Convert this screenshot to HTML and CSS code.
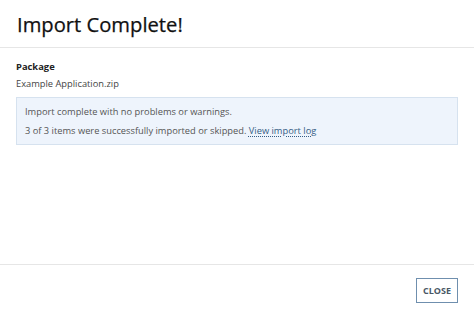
FILE: index.html
```html
<!DOCTYPE html>
<html>
<head>
<meta charset="utf-8">
<link rel="stylesheet" href="styles.css">
</head>
<body>
<div class="dialog">
  <div class="header"><h1 class="title">Import Complete!</h1></div>
  <div class="content">
    <div class="label">Package</div>
    <div class="value">Example Application.zip</div>
    <div class="notice">
      <p class="line">Import complete with no problems or warnings.</p>
      <p class="line">3 of 3 items were successfully imported or skipped. <a class="link" href="#">View import log</a></p>
    </div>
  </div>
  <div class="footer"><button class="btn">CLOSE</button></div>
</div>
</body>
</html>
```
FILE: styles.css
```css
html, body { margin: 0; padding: 0; background: #fff; }
body { font-family: "Open Sans", "Liberation Sans", sans-serif; color: #333; }
.dialog { width: 474px; height: 316px; display: flex; flex-direction: column; }
.header { height: 48px; border-bottom: 1px solid #e6e6e6; display: flex; align-items: center; padding: 0 17px; box-sizing: border-box; }
.title { margin: 0; font-size: 20.2px; font-weight: 400; color: #111; -webkit-text-stroke: 0.25px #111; }
.content { flex: 1; padding: 12px 16px 0; }
.label { font-size: 9.4px; font-weight: 700; color: #222; line-height: 14px; }
.value { font-size: 9.3px; color: #444; line-height: 14px; margin-top: 3px; }
.notice { margin-top: 6px; background: #eef4fc; border: 1px solid #d6e2ef; padding: 4px 8px; }
.line { margin: 0; font-size: 9.3px; color: #555; line-height: 19px; }
.link { color: #355d85; text-decoration: underline dotted; text-underline-offset: 2px; }
.footer { height: 51px; border-top: 1px solid #e6e6e6; display: flex; justify-content: flex-end; align-items: center; padding: 0 16px; }
.btn { font-family: inherit; font-size: 9px; font-weight: 700; color: #4a5866; background: #fff; border: 1px solid #6f8fae; padding: 0 6px; height: 25px; }
```
